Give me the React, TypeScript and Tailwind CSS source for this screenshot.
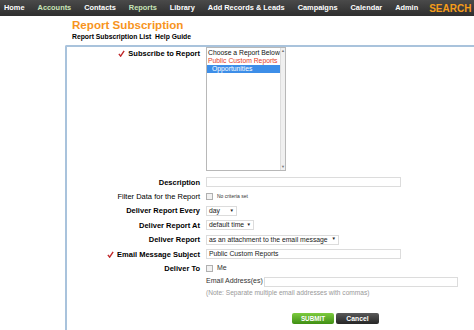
const nav = ["Home", "Accounts", "Contacts", "Reports", "Library", "Add Records & Leads", "Campaigns", "Calendar", "Admin"];

function Check() {
  return (
    <svg width="7" height="7" viewBox="0 0 8 8" className="mr-[3px] inline-block align-[-1px]">
      <path d="M1 4.5 L3 7 L7 1" fill="none" stroke="#c0282a" strokeWidth="1.6" />
    </svg>
  );
}

function Row({ label, bold = true, req = false, children }: { label: string; bold?: boolean; req?: boolean; children?: React.ReactNode }) {
  return (
    <div className="flex h-[14.4px] items-center">
      <div className={`w-[139px] pr-[6px] text-right text-[7.5px] text-black ${bold ? "font-bold" : ""}`}>
        {req && <Check />}
        {label}
      </div>
      <div className="flex items-center">{children}</div>
    </div>
  );
}

function Select({ text, w }: { text: string; w: string }) {
  return (
    <div className={`flex h-[10px] items-center justify-between border border-[#dcdcdc] bg-white px-[2px] text-[6.8px] text-[#222] ${w}`}>
      <span>{text}</span>
      <span className="text-[4.5px]">▼</span>
    </div>
  );
}

function Box() {
  return <span className="inline-block h-[7px] w-[7px] border border-[#b0b0b0] bg-[#f2f2f2]" />;
}

export default function App() {
  return (
    <div className="h-[330px] w-[474px] overflow-hidden whitespace-nowrap bg-white" style={{ fontFamily: '"Liberation Sans", Arial, sans-serif' }}>
      <div className="flex h-[16px] items-center bg-gradient-to-b from-[#4a4a4a] to-[#2e2e2e] pl-[4px] text-[7.4px] font-bold text-white">
        <div className="flex gap-[13px]">
          {nav.map((n) => (
            <span key={n} className={n === "Accounts" || n === "Reports" ? "text-[#c9e6b8]" : ""}>{n}</span>
          ))}
        </div>
        <span className="ml-[11px] text-[10px] text-[#f59c1a]">SEARCH</span>
      </div>
      <div className="pl-[72px] pt-[2px]">
        <div className="text-[11.6px] font-bold leading-[14px] text-[#f7941d]">Report Subscription</div>
        <div className="mt-[1px] text-[6.8px] font-bold leading-[8px] text-black">Report Subscription List&nbsp;&nbsp;Help Guide</div>
      </div>
      <div className="ml-[65px] mt-[4px] h-[300px] rounded-tl-[2px] border-l-2 border-t-2 border-[#a9c3dc]">
        <div className="flex">
          <div className="w-[139px] pr-[6px] pt-[1px] text-right text-[7.5px] font-bold">
            <Check />Subscribe to Report
          </div>
          <div className="flex h-[124px] w-[80px] border border-[#b8b8b8] bg-white">
            <div className="flex-1 overflow-hidden pt-[1px] text-[6.8px] leading-[8px]">
              <div className="pl-[1px] text-[#111]">Choose a Report Below</div>
              <div className="pl-[1px] text-[#e53a1e]">Public Custom Reports</div>
              <div className="bg-[#3d8ee8] pl-[5px] text-white">Opportunities</div>
            </div>
            <div className="flex w-[5px] flex-col justify-between border-l border-[#ddd] bg-[#f0f0f0] text-center text-[4px] text-[#777]">
              <span>▲</span>
              <span>▼</span>
            </div>
          </div>
        </div>
        <div className="mt-[4px]">
          <Row label="Description">
            <div className="h-[10px] w-[195px] border border-[#dcdcdc]" />
          </Row>
          <Row label="Filter Data for the Report" bold={false}>
            <Box />
            <span className="ml-[4px] text-[5px] text-[#333]">No criteria set</span>
          </Row>
          <Row label="Deliver Report Every">
            <Select text="day" w="w-[31px]" />
          </Row>
          <Row label="Deliver Report At">
            <Select text="default time" w="w-[48px]" />
          </Row>
          <Row label="Deliver Report">
            <Select text="as an attachment to the email message" w="w-[133px]" />
          </Row>
          <Row label="Email Message Subject" req>
            <div className="flex h-[10px] w-[195px] items-center border border-[#dcdcdc] px-[2px] text-[6.8px] text-[#222]">Public Custom Reports</div>
          </Row>
          <Row label="Deliver To">
            <Box />
            <span className="ml-[4px] text-[7px] text-[#333]">Me</span>
          </Row>
          <div className="ml-[139px]">
            <div className="flex h-[12px] w-[252px] items-center text-[7px] text-[#333]">
              Email Address(es)
              <div className="ml-[1px] h-[10px] flex-1 border border-[#dcdcdc]" />
            </div>
            <div className="mt-[1px] text-[6.6px] leading-[8px] text-[#999]">(Note: Separate multiple email addresses with commas)</div>
          </div>
          <div className="ml-[225px] mt-[16px] flex gap-[2px]">
            <button className="h-[11px] w-[42px] rounded-[2px] bg-gradient-to-b from-[#7ccb3e] to-[#3f8f12] text-[6.3px] font-bold leading-[11px] text-white">SUBMIT</button>
            <button className="h-[11px] w-[43px] rounded-[2px] bg-gradient-to-b from-[#5a5a5a] to-[#262626] text-[6.8px] font-bold leading-[11px] text-white">Cancel</button>
          </div>
        </div>
      </div>
    </div>
  );
}
